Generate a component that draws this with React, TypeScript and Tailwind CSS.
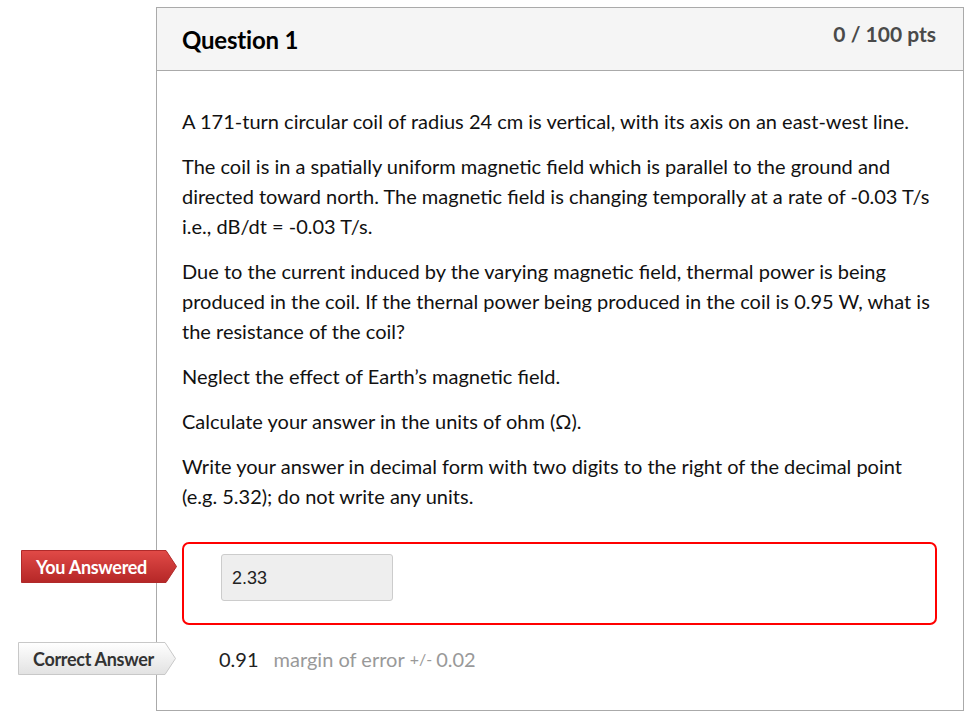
import React from "react";

function Ribbon({ variant, text, w }: { variant: "red" | "gray"; text: string; w: number }) {
  const h = 33;
  const tip = 11;
  const pts = `0.5,0.5 ${w - tip},0.5 ${w - 0.5},${h / 2} ${w - tip},${h - 0.5} 0.5,${h - 0.5}`;
  const id = variant === "red" ? "gRed" : "gGray";
  return (
    <div className="relative" style={{ width: w, height: h }}>
      <svg className="absolute inset-0" width={w} height={h}>
        <defs>
          <linearGradient id={id} x1="0" y1="0" x2="0" y2="1">
            {variant === "red" ? (
              <>
                <stop offset="0" stopColor="#e14a47" />
                <stop offset="1" stopColor="#b52727" />
              </>
            ) : (
              <>
                <stop offset="0" stopColor="#ffffff" />
                <stop offset="1" stopColor="#e2e2e2" />
              </>
            )}
          </linearGradient>
        </defs>
        <polygon
          points={pts}
          fill={`url(#${id})`}
          stroke={variant === "red" ? "#b02a2a" : "#c8c8c8"}
          strokeWidth="1"
          strokeLinejoin="round"
        />
      </svg>
      <div
        className={
          "relative flex h-full items-center pl-[15px] text-[18px] font-bold tracking-[-0.3px] " +
          (variant === "red" ? "text-white" : "text-[#333]")
        }
      >
        {text}
      </div>
    </div>
  );
}

export default function App() {
  return (
    <div className="min-h-[712px] bg-white pt-[7px] font-['Lato',sans-serif] text-[#2d3b45]">
      <div className="relative ml-[156px] h-[704px] w-[808px] border border-[#aaaaaa]">
        <div className="flex h-[63px] items-start justify-between border-b border-[#aaaaaa] bg-[#f5f5f5] pl-[25px] pr-[27px]">
          <h2 className="mt-[14px] text-[24px] font-bold tracking-[-0.2px] text-black">Question 1</h2>
          <div className="mt-[10px] text-[21px] font-bold text-[#4a4a4a]">0 / 100 pts</div>
        </div>
        <div className="px-[25px] pt-[35px] text-[20px] leading-[30px] text-[#111]">
          <p className="mb-[15px]">
            A 171-turn circular coil of radius 24 cm is vertical, with its axis on an east-west line.
          </p>
          <p className="mb-[15px]">
            The coil is in a spatially uniform magnetic field which is parallel to the ground and directed toward north. The
            magnetic field is changing temporally at a rate of -0.03 T/s i.e., dB/dt = -0.03 T/s.
          </p>
          <p className="mb-[15px]">
            Due to the current induced by the varying magnetic field, thermal power is being produced in the coil. If the
            thernal power being produced in the coil is 0.95 W, what is the resistance of the coil?
          </p>
          <p className="mb-[15px]">Neglect the effect of Earth’s magnetic field.</p>
          <p className="mb-[15px]">Calculate your answer in the units of ohm (Ω).</p>
          <p>
            Write your answer in decimal form with two digits to the right of the decimal point (e.g. 5.32); do not write
            any units.
          </p>
          <div className="relative mt-[31px] h-[83px] w-[755px] rounded-[7px] border-2 border-[#ff0000] pl-[37px] pt-[10px]">
            <div className="absolute left-[-163px] top-[6px]">
              <Ribbon variant="red" text="You Answered" w={156} />
            </div>
            <div className="flex h-[47px] w-[172px] items-center rounded-[3px] border border-[#cccccc] bg-[#eeeeee] pl-[10px] font-['Liberation_Sans',sans-serif] text-[18px] text-[#222]">
              2.33
            </div>
          </div>
          <div className="relative mt-[17px] flex h-[33px] items-center pl-[37px]">
            <div className="absolute left-[-164px] top-0">
              <Ribbon variant="gray" text="Correct Answer" w={158} />
            </div>
            <span className="text-[20px] text-[#222]">0.91</span>
            <span className="ml-[15px] text-[20px] text-[#999]">margin of error</span>
            <span className="ml-[5px] text-[16px] text-[#999]">+/-</span>
            <span className="ml-[4px] text-[20px] text-[#999]">0.02</span>
          </div>
        </div>
      </div>
    </div>
  );
}
